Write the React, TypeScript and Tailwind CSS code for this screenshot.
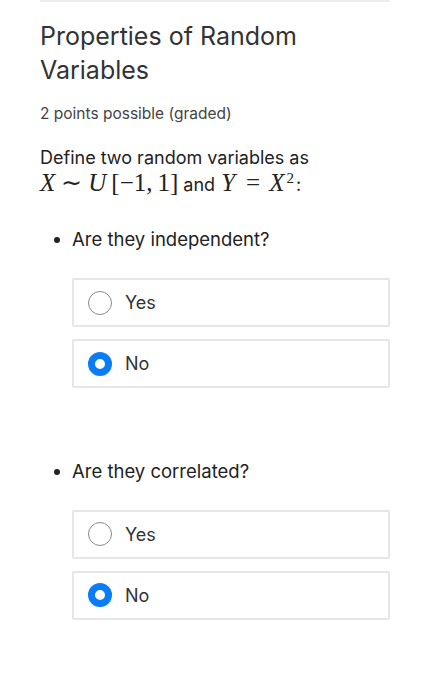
function Radio({ checked }: { checked: boolean }) {
  return checked ? (
    <span className="block h-6 w-6 shrink-0 rounded-full border-[7px] border-[#0a7cf5] bg-white" />
  ) : (
    <span className="block h-6 w-6 shrink-0 rounded-full border-[1.5px] border-[#8a8a8a] bg-white" />
  )
}

function Option({ label, checked }: { label: string; checked: boolean }) {
  return (
    <div className="flex h-[49px] items-center gap-[13px] rounded-[2px] border-2 border-[#e6e6e6] pl-[14px] text-[18px] text-[#333]">
      <Radio checked={checked} />
      <span>{label}</span>
    </div>
  )
}

function Question({ text, answer }: { text: string; answer: string }) {
  return (
    <div>
      <div className="flex items-center text-[18.5px] text-[#222]">
        <span className="ml-[14px] mr-[12px] h-[6px] w-[6px] rounded-full bg-[#222]" />
        <span>{text}</span>
      </div>
      <div className="mt-[24px] ml-[32px] flex flex-col gap-[12px]">
        <Option label="Yes" checked={answer === 'Yes'} />
        <Option label="No" checked={answer === 'No'} />
      </div>
    </div>
  )
}

export default function App() {
  return (
    <div className="min-h-[700px] bg-white font-['Inter','Noto_Sans',sans-serif]">
      <div className="mx-[40px] w-[350px] border-t-2 border-[#ececec] pt-[17px]">
        <h2 className="text-[25px] leading-[34px] text-[#333]">Properties of Random Variables</h2>
        <p className="mt-[15px] text-[15.5px] text-[#444]">2 points possible (graded)</p>
        <div className="mt-[22px] text-[18px] leading-[22px] text-[#222]">
          <div>Define two random variables as</div>
          <div className="mt-[1px] flex items-baseline">
            <span className="font-['Liberation_Serif',serif] text-[25px] leading-[26px]">
              <i>X</i>
              <span className="mx-[6px]">∼</span>
              <i>U</i>
              <span className="ml-[5px]">[−1,&thinsp;1]</span>
            </span>
            <span className="ml-[5px]">and</span>
            <span className="ml-[6px] font-['Liberation_Serif',serif] text-[25px] leading-[26px]">
              <i>Y</i>
              <span className="ml-[11px] mr-[9px]">=</span>
              <i>X</i>
              <span className="relative -top-[8px] ml-[2px] text-[15px] leading-none">2</span>
            </span>
            <span className="ml-[2px]">:</span>
          </div>
        </div>
        <div className="mt-[30px]">
          <Question text="Are they independent?" answer="No" />
        </div>
        <div className="mt-[70px]">
          <Question text="Are they correlated?" answer="No" />
        </div>
      </div>
    </div>
  )
}
